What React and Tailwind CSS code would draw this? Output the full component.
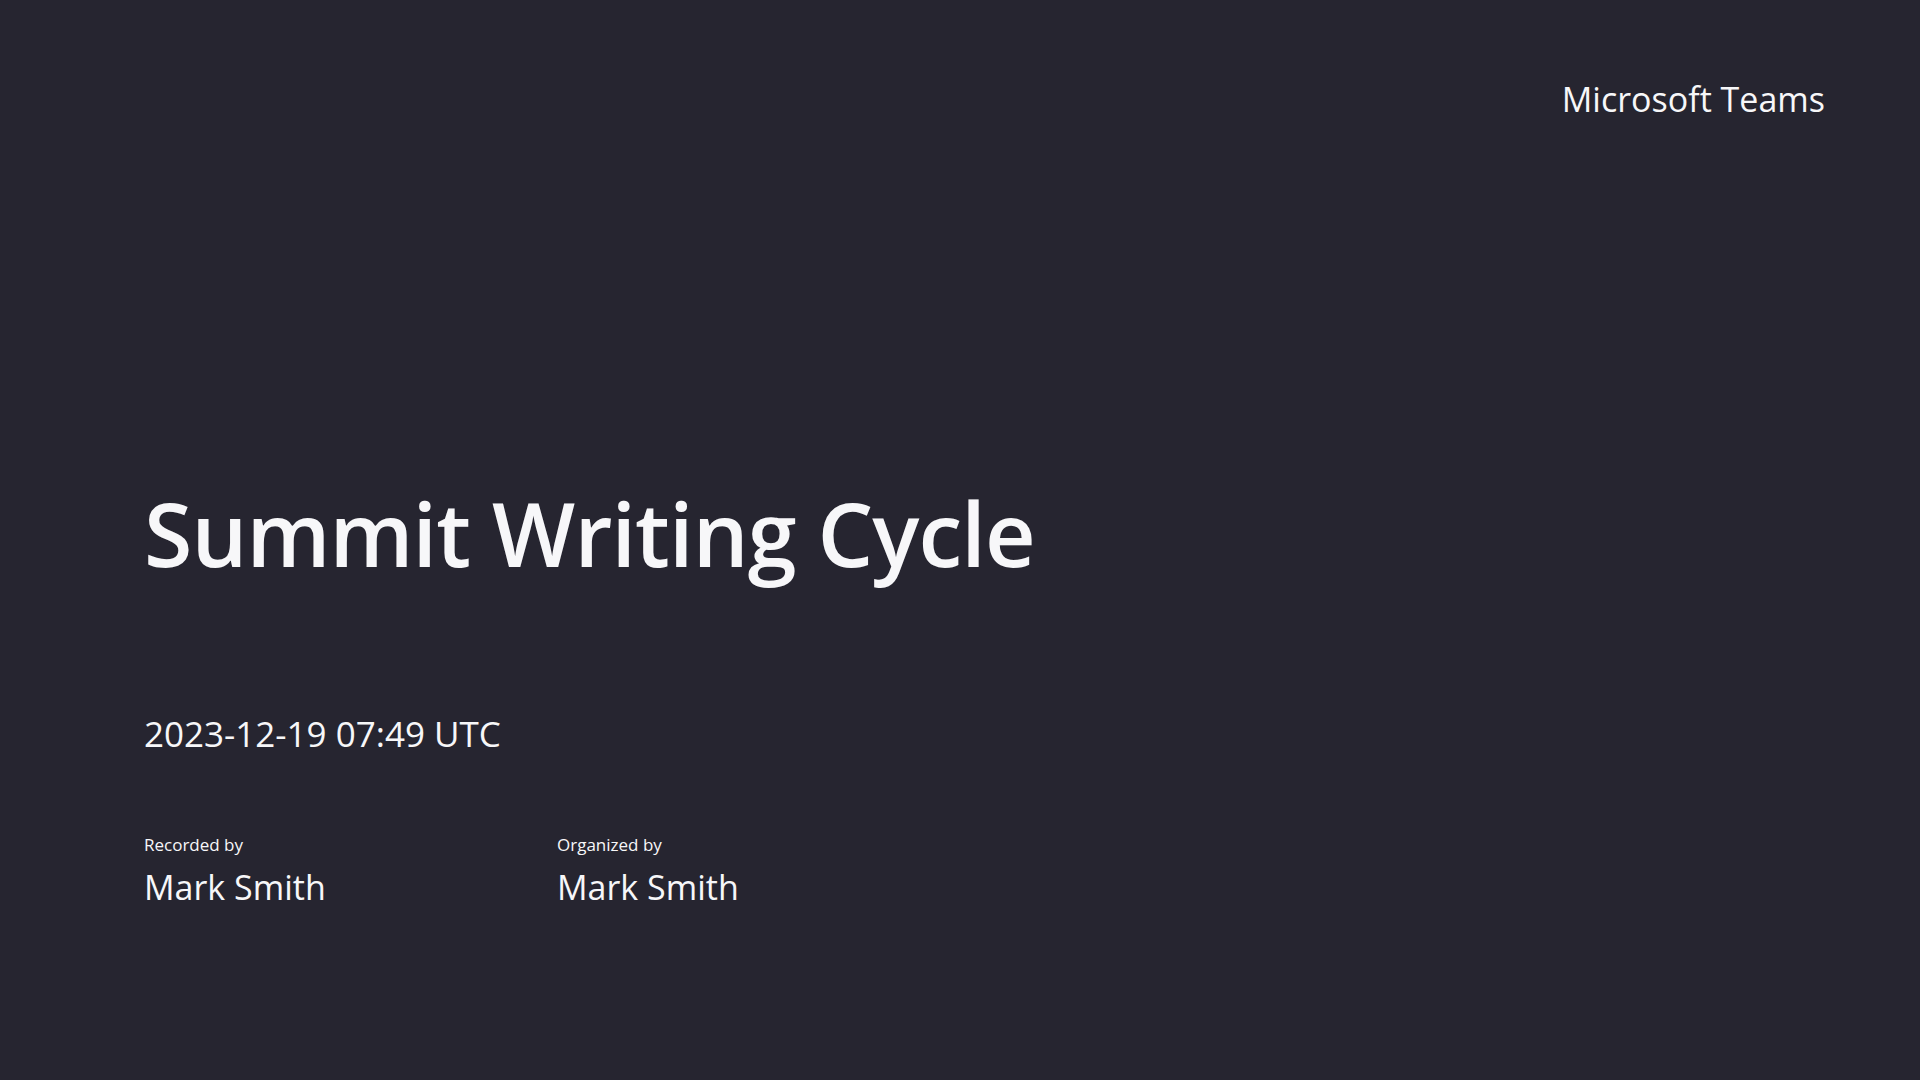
export default function App() {
  return (
    <div
      className="w-[1920px] h-[1080px] bg-[#262530] text-[#f7f7f9] flex flex-col overflow-hidden"
      style={{ fontFamily: '"Open Sans", "Noto Sans", sans-serif' }}
    >
      <div className="flex justify-end pr-[95px] pt-[75px]">
        <div className="text-[34px] leading-[48px]">Microsoft Teams</div>
      </div>
      <div className="pl-[144px] pt-[355px] flex flex-col">
        <div className="text-[88px] leading-[110px] font-semibold tracking-[-0.9px]">Summit Writing Cycle</div>
        <div className="mt-[124px] text-[35px] leading-[44px]">2023-12-19 07:49 UTC</div>
        <div className="mt-[78px] flex">
          <div className="w-[413px] flex flex-col">
            <div className="text-[17px] leading-[22px]">Recorded by</div>
            <div className="mt-[9px] text-[34px] leading-[44px]">Mark Smith</div>
          </div>
          <div className="flex flex-col">
            <div className="text-[17px] leading-[22px]">Organized by</div>
            <div className="mt-[9px] text-[34px] leading-[44px]">Mark Smith</div>
          </div>
        </div>
      </div>
    </div>
  );
}
